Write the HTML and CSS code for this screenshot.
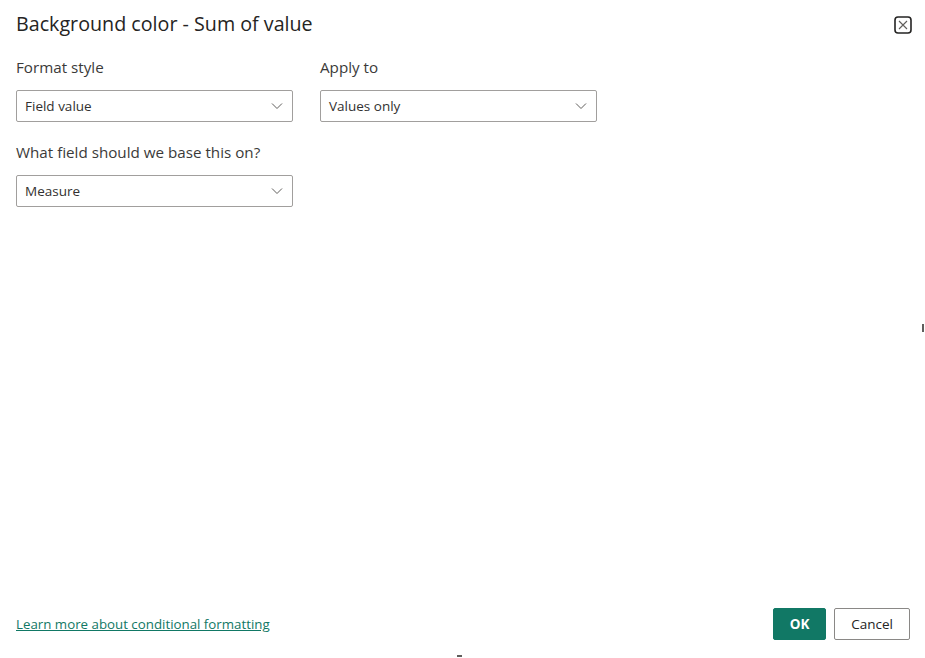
FILE: index.html
```html
<!DOCTYPE html>
<html lang="en">
<head>
    <meta charset="UTF-8">
    <meta name="viewport" content="width=device-width, initial-scale=1.0">
    <title>Background color - Sum of value</title>
    <link rel="stylesheet" href="styles.css">
</head>
<body>
    <div class="dialog">
        <div class="dialog-header">
            <h1>Background color - Sum of value</h1>
            <button class="close-btn" aria-label="Close">
                <svg width="18" height="18" viewBox="0 0 18 18">
                    <rect x="1" y="1" width="16" height="16" rx="3" fill="none" stroke="#252423" stroke-width="1.6"/>
                    <path d="M5 5 L13 13 M13 5 L5 13" stroke="#605e5c" stroke-width="1.1"/>
                </svg>
            </button>
        </div>

        <div class="form-row">
            <div class="field">
                <label>Format style</label>
                <div class="dropdown">
                    <span>Field value</span>
                    <svg class="chevron" width="12" height="8" viewBox="0 0 12 8"><path d="M1 1.5 L6 6.5 L11 1.5" fill="none" stroke="#605e5c" stroke-width="1"/></svg>
                </div>
            </div>
            <div class="field">
                <label>Apply to</label>
                <div class="dropdown">
                    <span>Values only</span>
                    <svg class="chevron" width="12" height="8" viewBox="0 0 12 8"><path d="M1 1.5 L6 6.5 L11 1.5" fill="none" stroke="#605e5c" stroke-width="1"/></svg>
                </div>
            </div>
        </div>

        <div class="form-row">
            <div class="field">
                <label>What field should we base this on?</label>
                <div class="dropdown">
                    <span>Measure</span>
                    <svg class="chevron" width="12" height="8" viewBox="0 0 12 8"><path d="M1 1.5 L6 6.5 L11 1.5" fill="none" stroke="#605e5c" stroke-width="1"/></svg>
                </div>
            </div>
        </div>

        <div class="dialog-footer">
            <a href="#" class="learn-link">Learn more about conditional formatting</a>
            <div class="actions">
                <button class="btn btn-primary">OK</button>
                <button class="btn btn-default">Cancel</button>
            </div>
        </div>
    </div>
    <!-- bits of the scrollbar / resize grip poking in at the edges -->
    <span class="edge-mark side"></span>
    <span class="edge-mark bottom"></span>
</body>
</html>
```

FILE: styles.css
```css
body {
    margin: 0;
    background-color: #fff;
    font-family: "Open Sans", "Noto Sans", Arial, sans-serif;
    color: #252423;
}
.dialog {
    box-sizing: border-box;
    height: 658px;
    padding: 11px 15px 18px 16px;
    display: flex;
    flex-direction: column;
}
.dialog-header {
    display: flex;
    justify-content: space-between;
    align-items: flex-start;
    margin-bottom: 20px;
}
.dialog-header h1 {
    margin: 0;
    font-size: 19.7px;
    font-weight: 400;
    line-height: 26px;
    color: #252423;
}
.close-btn {
    background: none;
    border: none;
    padding: 0;
    margin-top: 5px;
    margin-right: -2px;
    cursor: pointer;
}
.form-row {
    display: flex;
    gap: 27px;
    margin-bottom: 20px;
}
.field {
    display: flex;
    flex-direction: column;
}
.field label {
    font-size: 15.2px;
    line-height: 20px;
    color: #3b3a39;
    margin-bottom: 13px;
}
.dropdown {
    box-sizing: border-box;
    width: 277px;
    height: 32px;
    border: 1px solid #a19f9d;
    border-radius: 2px;
    display: flex;
    align-items: center;
    justify-content: space-between;
    padding: 0 8px 0 8px;
    font-size: 13.5px;
    color: #323130;
}
.chevron {
    margin-right: 1px;
}
.dialog-footer {
    margin-top: auto;
    display: flex;
    justify-content: space-between;
    align-items: center;
}
.learn-link {
    color: #117865;
    font-size: 13.3px;
    text-decoration: underline;
}
.actions {
    display: flex;
    gap: 8px;
}
.btn {
    box-sizing: border-box;
    height: 32px;
    border-radius: 2px;
    font-family: inherit;
    font-size: 13.5px;
    cursor: pointer;
}
.btn-primary {
    width: 53px;
    background-color: #117865;
    border: 1px solid #117865;
    color: #fff;
    font-weight: 700;
}
.btn-default {
    width: 76px;
    background-color: #fff;
    border: 1px solid #8a8886;
    color: #252423;
    font-weight: 400;
}
.edge-mark {
    position: absolute;
    background-color: #605e5c;
}
.edge-mark.side {
    left: 922px;
    top: 324px;
    width: 2px;
    height: 8px;
}
.edge-mark.bottom {
    left: 457px;
    top: 655px;
    width: 5px;
    height: 2px;
}
```
